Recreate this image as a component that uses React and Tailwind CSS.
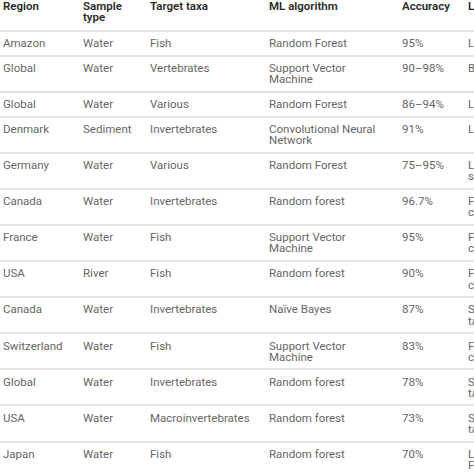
const rows = [
  ['Amazon', 'Water', 'Fish', 'Random Forest', '95%', 'Limited data'],
  ['Global', 'Water', 'Vertebrates', 'Support Vector Machine', '90–98%', 'Broad scope'],
  ['Global', 'Water', 'Various', 'Random Forest', '86–94%', 'Lab setting'],
  ['Denmark', 'Sediment', 'Invertebrates', 'Convolutional Neural Network', '91%', 'Local study'],
  ['Germany', 'Water', 'Various', 'Random Forest', '75–95%', 'Limited\nsample size'],
  ['Canada', 'Water', 'Invertebrates', 'Random forest', '96.7%', 'Field\nconditions'],
  ['France', 'Water', 'Fish', 'Support Vector Machine', '95%', 'Field\nconditions'],
  ['USA', 'River', 'Fish', 'Random forest', '90%', 'Field\nconditions'],
  ['Canada', 'Water', 'Invertebrates', 'Naïve Bayes', '87%', 'Small\ntaxa set'],
  ['Switzerland', 'Water', 'Fish', 'Support Vector Machine', '83%', 'Few\ncampaigns'],
  ['Global', 'Water', 'Invertebrates', 'Random forest', '78%', 'Sparse\ntaxa data'],
  ['USA', 'Water', 'Macroinvertebrates', 'Random forest', '73%', 'Sparse\ntaxa data'],
  ['Japan', 'Water', 'Fish', 'Random forest', '70%', 'Limited\nFish data'],
]

const head = ['Region', 'Sample type', 'Target taxa', 'ML algorithm', 'Accuracy', 'Limitations']

const cols = 'grid grid-cols-[80px_67px_119px_133px_66px_120px] border-b-2 border-[#e3e3e3]'

export default function App() {
  return (
    <div
      className="w-[474px] h-[474px] overflow-hidden bg-white text-[11.5px] leading-[11.1px]"
      style={{ fontFamily: 'Roboto, "Liberation Sans", sans-serif' }}
    >
      <div className="w-[600px]">
        <div className={cols}>
          {head.map((h, i) => (
            <div key={i} className="pl-[3px] pr-[10px] pt-[0.5px] pb-[7.3px] font-semibold text-[#2a2a2a]">
              {h}
            </div>
          ))}
        </div>
        {rows.map((r, i) => (
          <div key={i} className={cols}>
            {r.map((c, j) => (
              <div
                key={j}
                className="pl-[3px] pr-[10px] pt-[6.2px] pb-[5.7px] text-[#666666] whitespace-pre-line"
              >
                {c}
              </div>
            ))}
          </div>
        ))}
      </div>
    </div>
  )
}
